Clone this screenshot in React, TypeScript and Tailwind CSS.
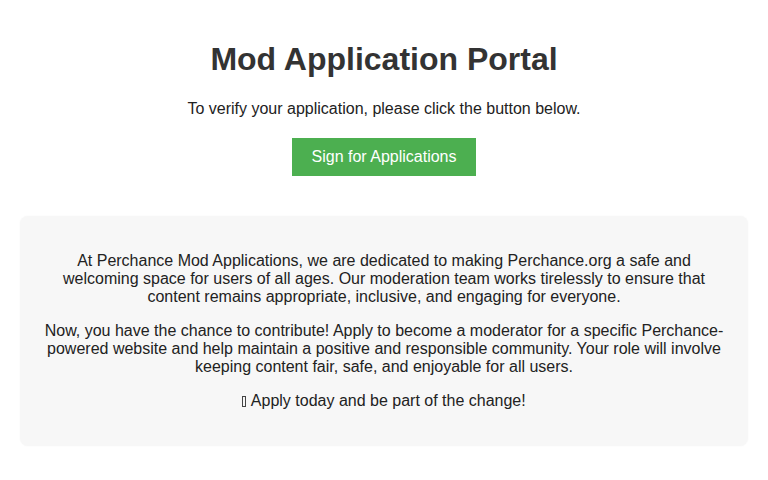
export default function App() {
  return (
    <div className="min-h-screen bg-white p-5 text-center text-[16px] text-[#222] [font-family:'Liberation_Sans',Arial,sans-serif]">
      <h1 className="mt-[21px] text-[32px] leading-[37px] font-bold text-[#333]">Mod Application Portal</h1>
      <p className="mt-[22px] leading-[18px]">To verify your application, please click the button below.</p>
      <div className="mt-[20px] flex justify-center">
        <button className="bg-[#4caf50] px-5 py-[10px] text-[16px] leading-[18px] text-white">
          Sign for Applications
        </button>
      </div>
      <div className="mt-10 rounded-lg bg-[#f7f7f7] px-5 py-5 shadow-[0_0_2px_rgba(0,0,0,0.04)]">
        <p className="my-4 leading-[18px]">
          At Perchance Mod Applications, we are dedicated to making Perchance.org a safe and welcoming space for users of all ages. Our moderation team works tirelessly to ensure that content remains appropriate, inclusive, and engaging for everyone.
        </p>
        <p className="my-4 leading-[18px]">
          Now, you have the chance to contribute! Apply to become a moderator for a specific Perchance-powered website and help maintain a positive and responsible community. Your role will involve keeping content fair, safe, and enjoyable for all users.
        </p>
        <p className="my-4 leading-[18px]">
          <span className="mr-[1px] inline-block h-[11px] w-[4px] border border-[#444] align-[-1px]" /> Apply today and be part of the change!
        </p>
      </div>
    </div>
  );
}
